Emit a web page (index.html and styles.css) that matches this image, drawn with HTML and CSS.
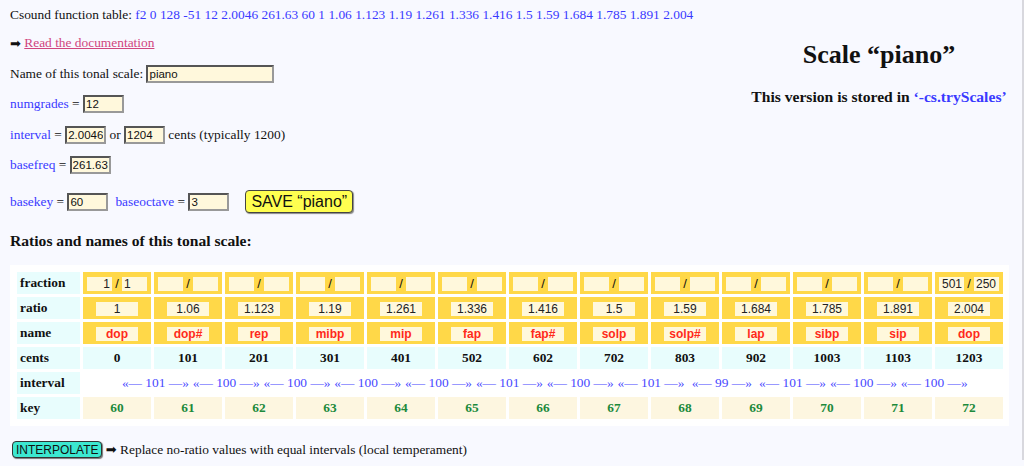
FILE: index.html
```html
<!DOCTYPE html>
<html>
<head>
<meta charset="utf-8">
<title>Scale piano</title>
<link rel="stylesheet" href="styles.css">
</head>
<body>
<div class="line first">Csound function table:&nbsp;<span class="blue">f2 0 128 -51 12 2.0046 261.63 60 1 1.06 1.123 1.19 1.261 1.336 1.416 1.5 1.59 1.684 1.785 1.891 2.004</span></div>

<div class="top">
  <div class="form">
    <div class="line"><span class="arrow">➡</span>&nbsp;<a class="doc" href="#">Read the documentation</a></div>
    <div class="line">Name of this tonal scale:&nbsp;<input class="fld w128" value="piano"></div>
    <div class="line"><span class="blue">numgrades</span>&nbsp;=&nbsp;<input class="fld w40" value="12"></div>
    <div class="line"><span class="blue">interval</span>&nbsp;=&nbsp;<input class="fld w40" value="2.0046">&nbsp;or&nbsp;<input class="fld w40" value="1204">&nbsp;cents (typically 1200)</div>
    <div class="line"><span class="blue">basefreq</span>&nbsp;=&nbsp;<input class="fld w40" value="261.63"></div>
    <div class="line tall"><span class="blue">basekey</span>&nbsp;=&nbsp;<input class="fld w40" value="60"><span class="blue sp">baseoctave</span>&nbsp;=&nbsp;<input class="fld w40" value="3"><button class="save">SAVE “piano”</button></div>
  </div>
  <div class="title">
    <h2>Scale “piano”</h2>
    <h4>This version is stored in <span class="blue">‘-cs.tryScales’</span></h4>
  </div>
</div>

<h3 class="ratios">Ratios and names of this tonal scale:</h3>

<div class="tablebox">
<table class="grid">
  <colgroup>
    <col class="clab">
    <col class="cdat"><col class="cdat"><col class="cdat"><col class="cdat"><col class="cdat"><col class="cdat"><col class="cdat"><col class="cdat"><col class="cdat"><col class="cdat"><col class="cdat"><col class="cdat"><col class="cdat">
  </colgroup>
  <tr>
    <td class="lab">fraction</td>
    <td class="gold"><input class="fr" value="1"><span class="sl">/</span><input class="fr left" value="1"></td>
    <td class="gold"><input class="fr"><span class="sl">/</span><input class="fr left"></td>
    <td class="gold"><input class="fr"><span class="sl">/</span><input class="fr left"></td>
    <td class="gold"><input class="fr"><span class="sl">/</span><input class="fr left"></td>
    <td class="gold"><input class="fr"><span class="sl">/</span><input class="fr left"></td>
    <td class="gold"><input class="fr"><span class="sl">/</span><input class="fr left"></td>
    <td class="gold"><input class="fr"><span class="sl">/</span><input class="fr left"></td>
    <td class="gold"><input class="fr"><span class="sl">/</span><input class="fr left"></td>
    <td class="gold"><input class="fr"><span class="sl">/</span><input class="fr left"></td>
    <td class="gold"><input class="fr"><span class="sl">/</span><input class="fr left"></td>
    <td class="gold"><input class="fr"><span class="sl">/</span><input class="fr left"></td>
    <td class="gold"><input class="fr"><span class="sl">/</span><input class="fr left"></td>
    <td class="gold"><input class="fr" value="501"><span class="sl">/</span><input class="fr left" value="250"></td>
  </tr>
  <tr>
    <td class="lab">ratio</td>
    <td class="gold"><input class="rt" value="1"></td>
    <td class="gold"><input class="rt" value="1.06"></td>
    <td class="gold"><input class="rt" value="1.123"></td>
    <td class="gold"><input class="rt" value="1.19"></td>
    <td class="gold"><input class="rt" value="1.261"></td>
    <td class="gold"><input class="rt" value="1.336"></td>
    <td class="gold"><input class="rt" value="1.416"></td>
    <td class="gold"><input class="rt" value="1.5"></td>
    <td class="gold"><input class="rt" value="1.59"></td>
    <td class="gold"><input class="rt" value="1.684"></td>
    <td class="gold"><input class="rt" value="1.785"></td>
    <td class="gold"><input class="rt" value="1.891"></td>
    <td class="gold"><input class="rt" value="2.004"></td>
  </tr>
  <tr>
    <td class="lab">name</td>
    <td class="gold"><input class="rt nm" value="dop"></td>
    <td class="gold"><input class="rt nm" value="dop#"></td>
    <td class="gold"><input class="rt nm" value="rep"></td>
    <td class="gold"><input class="rt nm" value="mibp"></td>
    <td class="gold"><input class="rt nm" value="mip"></td>
    <td class="gold"><input class="rt nm" value="fap"></td>
    <td class="gold"><input class="rt nm" value="fap#"></td>
    <td class="gold"><input class="rt nm" value="solp"></td>
    <td class="gold"><input class="rt nm" value="solp#"></td>
    <td class="gold"><input class="rt nm" value="lap"></td>
    <td class="gold"><input class="rt nm" value="sibp"></td>
    <td class="gold"><input class="rt nm" value="sip"></td>
    <td class="gold"><input class="rt nm" value="dop"></td>
  </tr>
  <tr>
    <td class="lab">cents</td>
    <td class="cent">0</td><td class="cent">101</td><td class="cent">201</td><td class="cent">301</td><td class="cent">401</td><td class="cent">502</td><td class="cent">602</td><td class="cent">702</td><td class="cent">803</td><td class="cent">902</td><td class="cent">1003</td><td class="cent">1103</td><td class="cent">1203</td>
  </tr>
  <tr>
    <td class="lab">interval</td>
    <td class="intv" colspan="13">
      <div class="slots">
        <span>«— 101 —»</span><span>«— 100 —»</span><span>«— 100 —»</span><span>«— 100 —»</span><span>«— 100 —»</span><span>«— 101 —»</span><span>«— 100 —»</span><span>«— 101 —»</span><span>«— 99 —»</span><span>«— 101 —»</span><span>«— 100 —»</span><span>«— 100 —»</span>
      </div>
    </td>
  </tr>
  <tr>
    <td class="lab">key</td>
    <td class="key">60</td><td class="key">61</td><td class="key">62</td><td class="key">63</td><td class="key">64</td><td class="key">65</td><td class="key">66</td><td class="key">67</td><td class="key">68</td><td class="key">69</td><td class="key">70</td><td class="key">71</td><td class="key">72</td>
  </tr>
</table>
</div>

<div class="line interp"><button class="ibtn">INTERPOLATE</button>&nbsp;<span class="arrow">➡</span>&nbsp;Replace no-ratio values with equal intervals (local temperament)</div>
</body>
</html>
```
FILE: styles.css
```css
html {
  background: #f8f9ff;
  border-right: 2px solid #d8d8de;
}
body {
  margin: 5px 13px 0 10px;
  font-family: "Liberation Serif", "Times New Roman", serif;
  font-size: 13.4px;
  color: #111;
  background: #f8f9ff;
}
.blue { color: #3a3aff; }
.line {
  display: flex;
  align-items: center;
  height: 20px;
  white-space: nowrap;
}
.first { margin-bottom: 8px; }
.top {
  display: flex;
  align-items: flex-start;
}
.form {
  display: flex;
  flex-direction: column;
  gap: 10.6px;
}
.form .tall { height: 24px; margin-top: 4px; }
.arrow {
  font-family: "DejaVu Sans", sans-serif;
  font-size: 13px;
  color: #111;
}
.doc {
  color: #d0457e;
  text-decoration: underline;
}
.fld {
  box-sizing: border-box;
  height: 18px;
  background: #fff8dc;
  border: 2px solid #555;
  border-right-color: #999;
  border-bottom-color: #999;
  font-family: "Liberation Sans", Arial, sans-serif;
  font-size: 11.5px;
  padding: 0 1px;
  color: #111;
}
.w128 { width: 128px; }
.w40 { width: 41px; }
.sp { margin-left: 7px; }
.save {
  margin-left: 16px;
  height: 23px;
  padding: 0 5px;
  background: #ffff50;
  border: 1px solid #444;
  border-radius: 4px;
  box-shadow: 1px 1px 1px #888;
  font-family: "Liberation Sans", Arial, sans-serif;
  font-size: 16px;
  color: #111;
}
.title {
  margin-left: auto;
  width: 260px;
  text-align: center;
  white-space: nowrap;
}
.title h2 {
  margin: 7px 0 0;
  font-size: 26px;
  line-height: 30px;
}
.title h4 {
  margin: 18px 0 0;
  font-size: 15.6px;
  line-height: 17px;
}
.ratios {
  margin: 17px 0 0;
  font-size: 15.6px;
  line-height: 20px;
}
.tablebox {
  margin-top: 14px;
  background: #fff;
  padding: 4px 3px 4px 4px;
}
.grid {
  table-layout: fixed;
  width: 992px;
  border-collapse: separate;
  border-spacing: 3px;
}
.clab { width: 63px; }
.cdat { width: 68px; }
.grid td {
  height: 22px;
  padding: 0;
  text-align: center;
  white-space: nowrap;
  font-size: 13.4px;
}
.grid .lab {
  text-align: left;
  padding-left: 3px;
  background: #e8fdfd;
  font-weight: bold;
}
.gold { background: #ffd848; }
.fr, .rt {
  box-sizing: border-box;
  height: 14px;
  border: none;
  background: #fff8dc;
  font-family: "Liberation Sans", Arial, sans-serif;
  font-size: 12px;
  padding: 0 2px;
  vertical-align: middle;
  color: #222;
}
.fr { width: 25px; text-align: right; }
.fr.left { text-align: left; }
.sl {
  display: inline-block;
  width: 10px;
  font-family: "Liberation Sans", Arial, sans-serif;
  font-size: 13px;
  vertical-align: middle;
}
.rt { width: 42px; text-align: center; }
.nm { color: #ff2a1a; font-weight: bold; }
.cent {
  background: #e8fdfd;
  font-weight: bold;
}
.intv { background: #fff; }
.slots {
  display: flex;
  padding-left: 37px;
}
.slots span {
  width: 70.8px;
  flex: none;
  text-align: center;
  color: #4848ff;
}
.key {
  background: #fdf6e0;
  color: #1c8a3c;
  font-weight: bold;
}
.interp { margin-top: 14px; }
.ibtn {
  margin-left: 2px;
  height: 17px;
  padding: 0 3px;
  background: #3ce8d0;
  border: 1px solid #333;
  border-radius: 4px;
  box-shadow: 1px 1px 1px #777;
  font-family: "Liberation Sans", Arial, sans-serif;
  font-size: 12px;
  color: #111;
}
```
